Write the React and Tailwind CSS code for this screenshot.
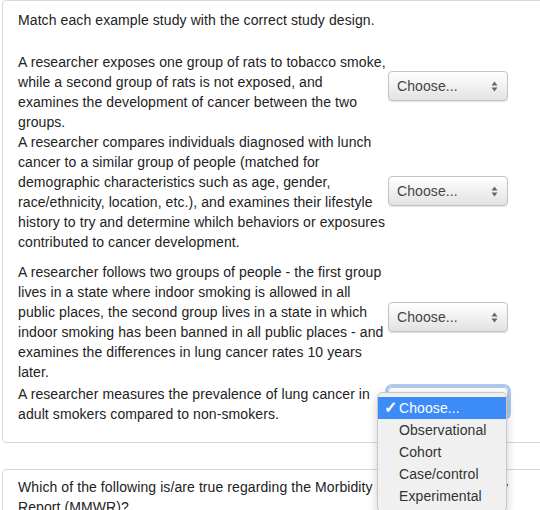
const rows = [
  {
    lines: [
      'A researcher exposes one group of rats to tobacco smoke,',
      'while a second group of rats is not exposed, and',
      'examines the development of cancer between the two',
      'groups.',
    ],
    mt: 'mt-[19px]',
    gap: '',
  },
  {
    lines: [
      'A researcher compares individuals diagnosed with lunch',
      'cancer to a similar group of people (matched for',
      'demographic characteristics such as age, gender,',
      'race/ethnicity, location, etc.), and examines their lifestyle',
      'history to try and determine whilch behaviors or exposures',
      'contributed to cancer development.',
    ],
    mt: 'mt-[44px]',
    gap: '',
  },
  {
    lines: [
      'A researcher follows two groups of people - the first group',
      'lives in a state where indoor smoking is allowed in all',
      'public places, the second group lives in a state in which',
      'indoor smoking has been banned in all public places - and',
      'examines the differences in lung cancer rates 10 years',
      'later.',
    ],
    mt: 'mt-[40px]',
    gap: 'mt-[10px]',
  },
  {
    lines: [
      'A researcher measures the prevalence of lung cancer in',
      'adult smokers compared to non-smokers.',
    ],
    mt: 'mt-[3px]',
    gap: 'mt-[2px]',
    open: true,
  },
];

const options = ['Choose...', 'Observational', 'Cohort', 'Case/control', 'Experimental'];

function Arrows() {
  return (
    <svg width="7" height="11" viewBox="0 0 7 11" className="absolute right-[9px] top-[9px]">
      <path d="M3.5 0.5 L6.5 4.5 L0.5 4.5 Z" fill="#666" />
      <path d="M3.5 10.5 L6.5 6.5 L0.5 6.5 Z" fill="#666" />
    </svg>
  );
}

function Select({ focused }) {
  return (
    <div
      className={`relative flex items-center w-[120px] h-[30px] pl-[8px] rounded-[4px] border border-[#c4c4c4] bg-gradient-to-b from-white to-[#e2e2e2] shadow-[0_1px_1px_rgba(0,0,0,0.12)] ${
        focused ? 'ring-[3px] ring-[#a9c9f5]' : ''
      }`}
    >
      <span className="text-[14px] leading-[20px] text-[#444]">Choose...</span>
      <Arrows />
    </div>
  );
}

function Menu() {
  return (
    <div className="absolute left-[-11px] top-[5px] w-[130px] py-[4px] rounded-[5px] bg-[#f0f0f0] border border-[#c8c8c8] shadow-[0_4px_10px_rgba(0,0,0,0.2)] z-10">
      {options.map((opt, i) => (
        <div
          key={opt}
          className={`flex items-center h-[22px] text-[14px] leading-[22px] ${
            i === 0 ? 'bg-[#3d8bf7] text-white' : 'text-[#333]'
          }`}
        >
          <span className="w-[21px] pl-[6px] text-[16px] font-bold">{i === 0 ? '✓' : ''}</span>
          {opt}
        </div>
      ))}
    </div>
  );
}

export default function App() {
  return (
    <div className="w-[540px] h-[510px] overflow-hidden bg-white text-[#222] text-[14px] leading-[20px] tracking-[0.09px] font-['Liberation_Sans',Arial,sans-serif]">
      <div className="ml-[2px] w-[580px] rounded-[4px] border border-[#d8d8d8] pt-[9px] pb-[18px] pl-[15px]">
        <p>Match each example study with the correct study design.</p>
        <div className="mt-[22px] flex flex-col">
          {rows.map((row, i) => (
            <div key={i} className={`flex items-start ${row.gap}`}>
              <p className="w-[370px] whitespace-nowrap">
                {row.lines.map((l, j) => (
                  <span key={j} className="block">{l}</span>
                ))}
              </p>
              <div className={`relative ${row.mt}`}>
                <Select focused={row.open} />
                {row.open && <Menu />}
              </div>
            </div>
          ))}
        </div>
      </div>
      <div className="ml-[2px] mt-[26px] w-[580px] rounded-[4px] border border-[#d8d8d8] pt-[7px] pl-[15px]">
        <p className="whitespace-nowrap">
          <span className="block">Which of the following is/are true regarding the Morbidity and Mortality Weekly</span>
          <span className="block">Report (MMWR)?</span>
        </p>
      </div>
    </div>
  );
}
